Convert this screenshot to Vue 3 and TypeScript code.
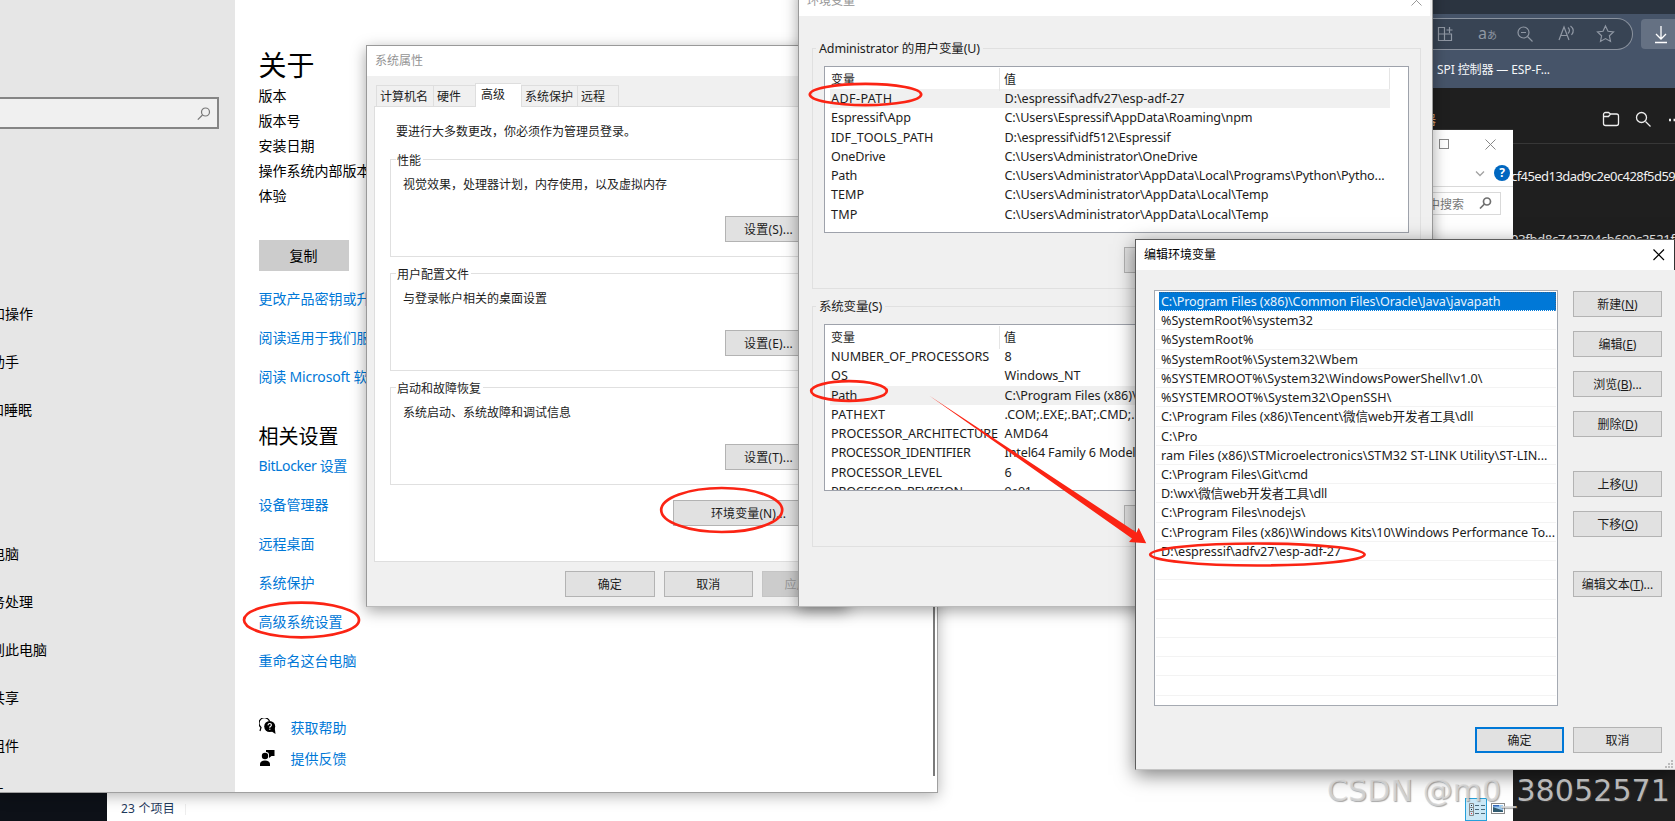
<script setup lang="ts">
interface EnvVar { name: string; value: string; nw?: number; vw?: number; selected?: boolean }

// Spreads a label over a given advance width through letter-spacing.
const vFit = {
  mounted(el: HTMLElement, binding: { value: number | undefined }) {
    const target = binding.value
    if (!target) return
    const count = Array.from(el.textContent ?? '').length
    el.style.letterSpacing = `${(target - el.getBoundingClientRect().width) / count}px`
  },
}

const navItems = [
  { text: '和操作', w: 33 }, { text: '助手', w: 19 }, { text: '和睡眠', w: 32 },
  { text: '', w: 10 }, { text: '', w: 10 },
  { text: '电脑', w: 19 }, { text: '务处理', w: 33 }, { text: '到此电脑', w: 47 },
  { text: '共享', w: 19 }, { text: '组件', w: 19 }, { text: '云', w: 5 },
]
const specs = ['版本', '版本号', '安装日期', '操作系统内部版本', '体验']
const topLinks = [
  { text: '更改产品密钥或升级' }, { text: '阅读适用于我们服务' }, { text: '阅读 Microsoft 软件', w: 122.5 },
]
const related = [
  { text: 'BitLocker 设置', w: 88.5 }, { text: '设备管理器' }, { text: '远程桌面' },
  { text: '系统保护' }, { text: '高级系统设置' }, { text: '重命名这台电脑' },
] as { text: string; w?: number }[]

const tabs = [
  { text: '计算机名', w: 57 }, { text: '硬件', w: 42 }, { text: '高级', w: 46, active: true },
  { text: '系统保护', w: 56 }, { text: '远程', w: 42 },
]
const groups = [
  { title: '性能', desc: '视觉效果，处理器计划，内存使用，以及虚拟内存', key: 'S' },
  { title: '用户配置文件', desc: '与登录帐户相关的桌面设置', key: 'E' },
  { title: '启动和故障恢复', desc: '系统启动、系统故障和调试信息', key: 'T' },
]

const userVars: EnvVar[] = [
  { name: 'ADF-PATH', nw: 61.5, value: 'D:\\espressif\\adfv27\\esp-adf-27', vw: 180, selected: true },
  { name: 'Espressif\\App', nw: 80, value: 'C:\\Users\\Espressif\\AppData\\Roaming\\npm', vw: 248 },
  { name: 'IDF_TOOLS_PATH', nw: 102.5, value: 'D:\\espressif\\idf512\\Espressif', vw: 166 },
  { name: 'OneDrive', nw: 54.5, value: 'C:\\Users\\Administrator\\OneDrive', vw: 193 },
  { name: 'Path', nw: 26, value: 'C:\\Users\\Administrator\\AppData\\Local\\Programs\\Python\\Pytho...', vw: 380 },
  { name: 'TEMP', nw: 33, value: 'C:\\Users\\Administrator\\AppData\\Local\\Temp', vw: 264 },
  { name: 'TMP', nw: 26.5, value: 'C:\\Users\\Administrator\\AppData\\Local\\Temp', vw: 264 },
]
const systemVars: EnvVar[] = [
  { name: 'NUMBER_OF_PROCESSORS', nw: 158, value: '8', vw: 7 },
  { name: 'OS', nw: 17, value: 'Windows_NT', vw: 76 },
  { name: 'Path', nw: 26, value: 'C:\\Program Files (x86)\\', vw: 132, selected: true },
  { name: 'PATHEXT', nw: 54.5, value: '.COM;.EXE;.BAT;.CMD;.', vw: 130 },
  { name: 'PROCESSOR_ARCHITECTURE', nw: 167, value: 'AMD64', vw: 44 },
  { name: 'PROCESSOR_IDENTIFIER', nw: 139.5, value: 'Intel64 Family 6 Model', vw: 131 },
  { name: 'PROCESSOR_LEVEL', nw: 111, value: '6', vw: 7 },
  { name: 'PROCESSOR_REVISION', nw: 132, value: '9e01', vw: 27 },
]
const panels = [
  { title: 'Administrator 的用户变量(U)', w: 161, rows: userVars },
  { title: '系统变量(S)', w: 63, rows: systemVars },
]

const paths = [
  { text: 'C:\\Program Files (x86)\\Common Files\\Oracle\\Java\\javapath', w: 339.5 },
  { text: '%SystemRoot%\\system32', w: 152 },
  { text: '%SystemRoot%', w: 92.5 },
  { text: '%SystemRoot%\\System32\\Wbem', w: 197 },
  { text: '%SYSTEMROOT%\\System32\\WindowsPowerShell\\v1.0\\', w: 321.5 },
  { text: '%SYSTEMROOT%\\System32\\OpenSSH\\', w: 230.5 },
  { text: 'C:\\Program Files (x86)\\Tencent\\微信web开发者工具\\dll', w: 312.5 },
  { text: 'C:\\Pro', w: 36.5 },
  { text: 'ram Files (x86)\\STMicroelectronics\\STM32 ST-LINK Utility\\ST-LIN...', w: 386.5 },
  { text: 'C:\\Program Files\\Git\\cmd', w: 147 },
  { text: 'D:\\wx\\微信web开发者工具\\dll', w: 166 },
  { text: 'C:\\Program Files\\nodejs\\', w: 144.5 },
  { text: 'C:\\Program Files (x86)\\Windows Kits\\10\\Windows Performance To...', w: 394 },
  { text: 'D:\\espressif\\adfv27\\esp-adf-27', w: 180 },
  { text: '', w: 0 }, { text: '', w: 0 }, { text: '', w: 0 }, { text: '', w: 0 },
  { text: '', w: 0 }, { text: '', w: 0 }, { text: '', w: 0 }, { text: '', w: 0 },
]
const sideButtons = [
  { text: '新建', key: 'N', tail: '' }, { text: '编辑', key: 'E', tail: '' },
  { text: '浏览', key: 'B', tail: '...' }, { text: '删除', key: 'D', tail: '' },
  { text: '上移', key: 'U', tail: '', gap: true }, { text: '下移', key: 'O', tail: '' },
  { text: '编辑文本', key: 'T', tail: '...', gap: true },
]
</script>

<template>
  <div class="desktop">
    <!-- browser -->
    <section class="browser">
      <div class="strip"></div>
      <div class="toolbar">
        <div class="address">
          <svg width="200" height="32" fill="none" stroke="#8f97a3" stroke-width="1.2">
            <path d="M8.5 9.5h6v13h-6zM8.5 16h13v6.5h-13zM14.5 16v6.5M14.5 11v5M19.5 9v6M16.5 12h6" />
            <circle cx="93.500" cy="14.500" r="5.500" /><path d="M97.500 18.500l5 5M91 14.500h5" />
            <path d="M129 22l5-13 5 13M131 17.500h6M138 9.500q3 3 0 6M140.500 8q5 4 1 9" />
            <path d="M175.500 8l2.500 5.300 5.500.7-4.100 3.800 1.100 5.600-5-2.800-5 2.800 1.100-5.600-4.100-3.800 5.500-.7z" />
          </svg>
          <span class="aa">a<small>あ</small></span>
        </div>
        <div class="download">
          <svg width="14" height="18" fill="none" stroke="#fff" stroke-width="1.300"><path d="M7 0v13M2 8l5 5 5-5M1 16.500h12" /></svg>
        </div>
      </div>
      <div class="bookmarks"><span v-fit="113">SPI 控制器 — ESP-F...</span></div>
      <div class="page-head">
        <svg width="75" height="20" fill="none" stroke="#eee" stroke-width="1.300">
          <path d="M3.500 5.500a2 2 0 012-2h3l2 1.500h6a2 2 0 012 2v7.500a2 2 0 01-2 2h-11a2 2 0 01-2-2zM3.500 7.500h5l2-2.500" />
          <circle cx="41.500" cy="8.500" r="5" /><path d="M45.500 12.500l5 5" />
          <path d="M69 11h2M73.500 11h2" stroke-width="2.500" />
        </svg>
      </div>
      <div class="hash first"><span v-fit="171">cf45ed13dad9c2e0c428f5d591</span></div>
      <div class="hash"><span v-fit="178">93fbd8c743704cb699c2521f41</span></div>
    </section>
    <span class="peek">器</span>

    <!-- file explorer -->
    <section class="explorer">
      <div class="ex-title">
        <i class="max"></i>
        <svg width="11" height="11" stroke="#888" fill="none"><path d="M.5.5l10 10M10.500.5l-10 10" /></svg>
      </div>
      <div class="ex-ribbon">
        <svg width="10" height="6" fill="none" stroke="#a2a2a2" stroke-width="1.300"><path d="M1 .5l4 4 4-4" /></svg>
        <b>?</b>
      </div>
      <div class="ex-search"><span>中搜索</span>
        <svg width="13" height="13" fill="none" stroke="#6f6f6f" stroke-width="1.700"><circle cx="8" cy="4.500" r="3.500" /><path d="M5.500 7L1 11.500" /></svg>
      </div>
      <div class="ex-status">
        <span class="count" v-fit="54">23 个项目</span>
        <i class="tick"></i>
        <div class="views">
          <div class="view">
            <svg width="20" height="21" fill="none" stroke="#888">
              <path d="M3.500 4.500h4v12h-4zM3.500 8.500h4M3.500 12.500h4" />
              <path stroke="#4a6a7c" d="M9 6.500h4M15 6.500h4M9 10.500h4M15 10.500h4M9 14.500h4M15 14.500h4" />
              <path stroke="#222" d="M5 6.500h1M5 10.500h1" /><path stroke="#e33" d="M5 14.500h1" />
            </svg>
          </div>
          <svg width="14" height="12"><rect x=".5" y=".5" width="13" height="10" fill="#fff" stroke="#8a8a8a" /><rect x="2" y="2" width="10" height="7" fill="#9cc9f2" /><path d="M2 4l4 1.500 6 2v1.500H2z" fill="#315b70" /><path d="M2 2h6v1.500H2z" fill="#3468b8" /></svg>
        </div>
      </div>
    </section>
    <div class="terminal"></div>

    <!-- settings -->
    <section class="settings">
      <aside>
        <div class="search">
          <svg width="14" height="14" fill="none" stroke="#777" stroke-width="1.200"><circle cx="8.500" cy="5" r="4" /><path d="M5.500 8L.8 12.700" /></svg>
        </div>
        <nav><div v-for="(n, i) in navItems" :key="i" :style="{ width: n.w + 'px' }"><span>{{ n.text }}</span></div></nav>
      </aside>
      <main>
        <h1>关于</h1>
        <p v-for="s in specs" :key="s">{{ s }}</p>
        <div class="copy">复制</div>
        <a v-for="l in topLinks" :key="l.text"><span v-fit="l.w">{{ l.text }}</span></a>
        <h2>相关设置</h2>
        <a v-for="l in related" :key="l.text"><span v-fit="l.w">{{ l.text }}</span></a>
        <div class="help first">
          <svg width="18" height="18"><path d="M1 13l1-3.500A5.500 5.500 0 1110.500 3" fill="none" stroke="#000" stroke-width="1.200" /><circle cx="10.700" cy="8.500" r="5.500" /><path d="M12 13l4.500 3-.8-6z" /><path d="M9 7.200q.1-1.700 1.700-1.700 1.700 0 1.700 1.500 0 1-1.600 1.900v.9M10.800 10.800v1" fill="none" stroke="#fff" stroke-width="1.200" /></svg>
          <span>获取帮助</span>
        </div>
        <div class="help">
          <svg width="18" height="18"><circle cx="6" cy="7" r="3.200" /><path d="M1 17v-1.500q0-4 5-4t5 4V17zM7 1h8.500v6h-3l-2.500 2V6q0-3-3-3z" /></svg>
          <span>提供反馈</span>
        </div>
      </main>
      <i class="thumb"></i>
    </section>

    <!-- system properties -->
    <section class="dialog props">
      <header>系统属性</header>
      <div class="tabs"><div v-for="t in tabs" :key="t.text" :class="{ active: t.active }" :style="{ width: t.w + 'px' }">{{ t.text }}</div></div>
      <div class="sheet">
        <div class="note">要进行大多数更改，你必须作为管理员登录。</div>
        <div v-for="g in groups" :key="g.key" class="group">
          <b>{{ g.title }}</b>
          <p>{{ g.desc }}</p>
          <div class="btn"><span v-fit="49">设置({{ g.key }})...</span></div>
        </div>
        <div class="btn env"><span v-fit="75">环境变量(N)...</span></div>
      </div>
      <footer><div class="btn">确定</div><div class="btn">取消</div><div class="btn off">应用(A)</div></footer>
    </section>

    <!-- environment variables -->
    <section class="dialog envs">
      <header><span>环境变量</span><svg width="12" height="12" fill="none" stroke="#999"><path d="M.5.5l10 10M10.500.5l-10 10" /></svg></header>
      <div v-for="p in panels" :key="p.title" class="panel">
        <b><span v-fit="p.w">{{ p.title }}</span></b>
        <div class="table">
          <div class="thead"><span>变量</span><span>值</span></div>
          <div v-for="r in p.rows" :key="r.name" class="trow" :class="{ selected: r.selected }">
            <div><span v-fit="r.nw">{{ r.name }}</span></div><div><span v-fit="r.vw">{{ r.value }}</span></div>
          </div>
        </div>
        <div class="btn"></div>
      </div>
    </section>

    <!-- edit variable -->
    <section class="dialog edit">
      <header><span>编辑环境变量</span><svg width="12" height="12" fill="none" stroke="#000" stroke-width="1.200"><path d="M.5.5l10.500 10.500M11 .5L.5 11" /></svg></header>
      <div class="edit-body">
        <div class="list">
          <div v-for="(p, i) in paths" :key="i" :class="{ selected: i === 0 }"><span v-fit="p.w">{{ p.text }}</span></div>
        </div>
        <div class="side">
          <div v-for="b in sideButtons" :key="b.key" class="btn" :class="{ gap: b.gap }"><span>{{ b.text }}(<u>{{ b.key }}</u>){{ b.tail }}</span></div>
        </div>
      </div>
      <footer><div class="btn primary">确定</div><div class="btn">取消</div></footer>
      <svg class="grip" width="10" height="10" fill="#bcbcbc"><path d="M7 1h2v2H7zM7 4h2v2H7zM7 7h2v2H7zM4 4h2v2H4zM4 7h2v2H4zM1 7h2v2H1z" /></svg>
    </section>

    <div class="watermark"><span v-fit="343">CSDN @m0_38052571</span></div>

    <!-- red pen marks -->
    <svg class="marks" width="1675" height="821" fill="none" stroke="#fb2414" stroke-width="2.700">
      <ellipse cx="301.500" cy="620" rx="57.500" ry="17.300" />
      <ellipse cx="721.700" cy="510" rx="60.500" ry="22" />
      <ellipse cx="865.500" cy="94.500" rx="55.700" ry="10.600" />
      <ellipse cx="849" cy="391" rx="37.800" ry="9.800" />
      <ellipse cx="1257.400" cy="554.500" rx="107.200" ry="11" />
      <path d="M929 395.500L1136.500 532.500 1138.700 527.800 1146.200 543.200 1129 542 1132 538.500z" fill="#fb2414" stroke="none" />
    </svg>
  </div>
</template>

<style>
body { margin: 0; overflow: hidden; }
</style>

<style scoped>
* { box-sizing: border-box; }
.desktop { position: relative; width: 1675px; height: 821px; overflow: hidden; background: #fff; font: 12px "Noto Sans", "Noto Sans CJK SC", sans-serif; color: #1c1c1c; }
.desktop section { position: absolute; }
svg { display: block; flex: none; }
span { display: inline-block; white-space: pre; }
h1, h2, p { margin: 0; font-weight: 400; }
b { font-weight: 400; }

.browser { left: 1425px; top: 0; width: 250px; height: 821px; background: #1f1f1f; overflow: hidden; }
.strip { height: 14px; background: #2b3440; }
.toolbar { height: 42px; padding-top: 4px; background: #465469; display: flex; }
.address { position: relative; flex: none; width: 208px; height: 32px; border: 1px solid #8a929e; border-left: 0; border-radius: 0 16px 16px 0; background: #384454; padding-left: 5px; overflow: hidden; }
.address svg { margin-top: -1px; }
.aa { position: absolute; left: 53px; top: 3px; color: #8f97a3; font-size: 16px; line-height: 22px; }
.aa small { font-size: 10px; font-family: "Noto Sans CJK JP", sans-serif; }
.download { flex: none; width: 50px; height: 30px; margin: 1px 0 0 8px; border-radius: 4px; background: #657183; padding: 7px 0 0 13px; }
.bookmarks { height: 32px; background: #465469; padding-left: 12px; line-height: 27px; color: #f5f7f9; }
.page-head { height: 56px; border-bottom: 1px solid #373737; padding: 21px 0 0 175px; }
.hash { height: 22px; margin-top: 41px; padding-left: 86px; color: #f1f1f1; font-size: 13px; line-height: 22px; white-space: nowrap; }
.hash.first { margin-top: 21px; }
.peek { position: absolute; left: 1423px; top: 108px; font-size: 13px; line-height: 22px; color: #dca774; }

.explorer { left: 107px; top: 129px; width: 1406px; height: 692px; background: #fff; display: flex; flex-direction: column; align-items: flex-end; border-top: 1px solid #333; }
.ex-title { height: 32px; display: flex; gap: 36px; padding: 9px 17px 0 0; }
.max { width: 10px; height: 10px; border: 1px solid #888; }
.ex-ribbon { width: 100%; height: 25px; border-bottom: 1px solid #d9d9d9; display: flex; justify-content: flex-end; align-items: flex-start; gap: 9px; padding: 3px 3px 0 0; }
.ex-ribbon svg { margin-top: 6px; }
.ex-ribbon b { width: 16px; height: 16px; border-radius: 50%; background: #0067c0; color: #fff; font-weight: 700; font-size: 12px; line-height: 16px; text-align: center; }
.ex-search { width: 200px; height: 23px; margin: 5px 12px 0 0; border: 1px solid #d9d9d9; display: flex; justify-content: flex-end; align-items: center; gap: 15px; padding-right: 8px; color: #777; }
.ex-status { width: 100%; height: 24px; margin-top: auto; display: flex; }
.count { height: 12px; margin-left: 14px; color: #1e395b; line-height: 24px; }
.tick { width: 1px; height: 11px; margin: 7px 0 0 10px; background: #eee; }
.views { margin-left: auto; display: flex; gap: 4px; align-items: center; padding-right: 8px; }
.view { width: 22px; height: 23px; border: 1px solid #26a0da; background: #cbe8f6; }
.terminal { position: absolute; left: 0; top: 792px; width: 107px; height: 29px; background: #0d1118; }

.settings { left: -1px; top: -1px; width: 939px; height: 794px; border: 1px solid #a0a0a0; background: #fff; display: flex; box-shadow: 0 3px 14px rgba(0, 0, 0, .3); font-size: 14px; color: #000; }
aside { width: 235px; height: 792px; background: #e6e6e6; overflow: hidden; }
.search { width: 219px; height: 32px; margin-top: 97px; border: 2px solid #858585; border-left: 0; background: #f0f0f0; display: flex; justify-content: flex-end; padding: 8px 6px 0 0; }
nav { margin-top: 161px; }
nav div { height: 48px; line-height: 48px; display: flex; justify-content: flex-end; }
main { flex: 1; padding: 44px 0 0 23.500px; }
h1 { font-size: 28px; line-height: 43px; margin-bottom: -4px; }
main p { height: 25px; line-height: 25px; }
.copy { width: 90px; height: 31px; margin: 32px 0 8px; background: #ccc; text-align: center; line-height: 31px; }
main a { display: block; height: 39px; line-height: 39px; color: #0078d7; white-space: pre; }
h2 { font-size: 20px; line-height: 30px; margin: 26px 0 -6px; }
.help { height: 31px; display: flex; align-items: center; gap: 14px; color: #0078d7; }
.help.first { margin-top: 31px; }
.thumb { width: 2px; height: 776px; margin-right: 2px; background: #7a7a7a; }

.dialog { background: #f0f0f0; border: 1px solid #999; border-bottom-color: #bbb; box-shadow: 0 4px 14px rgba(0, 0, 0, .36); }
.dialog header { height: 30px; background: #fff; line-height: 30px; color: #949494; }
.btn { width: 89px; height: 26px; border: 1px solid #b3b3b3; background: #e1e1e1; display: flex; justify-content: center; align-items: center; font-size: 12px; color: #1c1c1c; white-space: nowrap; }

.props { left: 366px; top: 45px; width: 482px; height: 562px; }
.props header { padding-left: 8px; }
.tabs { height: 30px; display: flex; align-items: flex-end; padding-left: 9px; }
.tabs div { height: 21px; border: 1px solid #dedede; border-right: 0; border-bottom: 0; padding-left: 3px; line-height: 22px; }
.tabs div:last-child { border-right: 1px solid #dedede; }
.tabs .active { position: relative; height: 24px; margin-bottom: -1px; background: #fff; padding-left: 5px; }
.sheet { height: 456px; margin: 0 7px; border: 1px solid #dedede; background: #fff; padding: 15px 14px 0 15px; }
.note { height: 20px; margin: 0 0 17px 6px; line-height: 20px; }
.group { height: 98px; margin-bottom: 16px; border: 1px solid #e0e0e0; display: flex; flex-direction: column; }
.group b { align-self: flex-start; height: 20px; margin: -9px 0 0 5px; padding: 0 2px 0 1px; background: #fff; line-height: 20px; }
.group p { margin: 4px 0 0 12px; line-height: 20px; }
.group .btn { width: 90px; margin: 21px 0 0 334px; }
.group .btn, .env { justify-content: flex-start; padding-left: 18px; }
.sheet .env { width: 152px; margin: -1px 0 0 283px; padding-left: 37px; }
.props footer { display: flex; gap: 9px; padding: 9px 0 0 198px; }
.props footer .btn { width: 89.500px; flex: none; }
.props footer .off { width: 84px; background: #ccc; border-color: #c4c4c4; color: #999; }

.envs { left: 798px; top: -15px; width: 635px; height: 622px; }
.envs header { display: flex; justify-content: space-between; padding: 0 7px 0 8px; margin-right: 2px; }
.envs header svg { margin-top: 9px; }
.panel { width: 609px; height: 241px; margin: 32px 0 0 13px; border: 1px solid #e0e0e0; }
.panel + .panel { margin-top: 17px; }
.panel b { display: block; width: max-content; height: 20px; margin: -10px 0 0 3px; padding: 0 3px; background: #f0f0f0; line-height: 20px; }
.panel b span { font-size: 12.500px; }
.table { width: 585px; height: 167px; margin: 7px 0 0 11px; border: 1px solid #9ea2ab; background: #fff; overflow: hidden; padding: 1px 18px 0 5px; }
.thead { height: 21px; display: grid; grid-template-columns: 170px 1fr; border-right: 1px solid #e5e5e5; line-height: 23px; }
.thead span:first-child { border-right: 1px solid #e5e5e5; padding-left: 1px; }
.thead span:last-child { padding-left: 4px; }
.trow { height: 19.250px; display: grid; grid-template-columns: 173.500px 1fr; line-height: 19px; font-size: 12.600px; padding-left: 1px; white-space: nowrap; }
.trow > div { min-width: 0; }
.trow.selected { background: #f0f0f0; }
.panel .btn { margin: 14px 0 0 311px; }

.edit { left: 1135px; top: 239px; width: 541px; height: 531px; border-color: #5d5d5d; border-bottom-color: #c5c5c5; box-shadow: 0 5px 18px rgba(0, 0, 0, .5); }
.edit header { display: flex; justify-content: space-between; color: #000; padding: 0 9px 0 8px; border-right: 1px solid #333; }
.edit header svg { margin-top: 9px; }
.edit-body { display: flex; gap: 15px; padding: 20px 0 0 18px; }
.list { width: 404px; height: 416px; border: 1px solid #a5aab2; background: #fff; overflow: hidden; padding: 1px 1px 0; }
.list div { height: 19.230px; border-bottom: 1px solid #f3f3f3; padding-left: 5px; font-size: 12.600px; line-height: 19.500px; white-space: nowrap; }
.list .selected { margin-left: 3px; padding-left: 2px; background: #0078d7; border: 1px dotted #2c6190; border-left-width: 0; border-bottom-color: #fff; line-height: 18px; color: #e8f3fc; }
.side { padding-top: 1px; display: flex; flex-direction: column; gap: 14px; }
.side .gap { margin-top: 20px; }
u { text-underline-offset: 1px; }
.edit footer { display: flex; gap: 9px; padding: 21px 0 0 339px; }
.primary { border: 2px solid #0078d7; }
.grip { position: absolute; right: 1px; bottom: 0; }

.watermark { position: absolute; left: 1327px; top: 770px; height: 42px; line-height: 42px; font-family: "DejaVu Sans", sans-serif; font-weight: 400; font-size: 30px; color: rgba(216, 216, 216, .82); text-shadow: 1px 1px 1px rgba(80, 80, 80, .5); }
.marks { position: absolute; left: 0; top: 0; }
</style>
